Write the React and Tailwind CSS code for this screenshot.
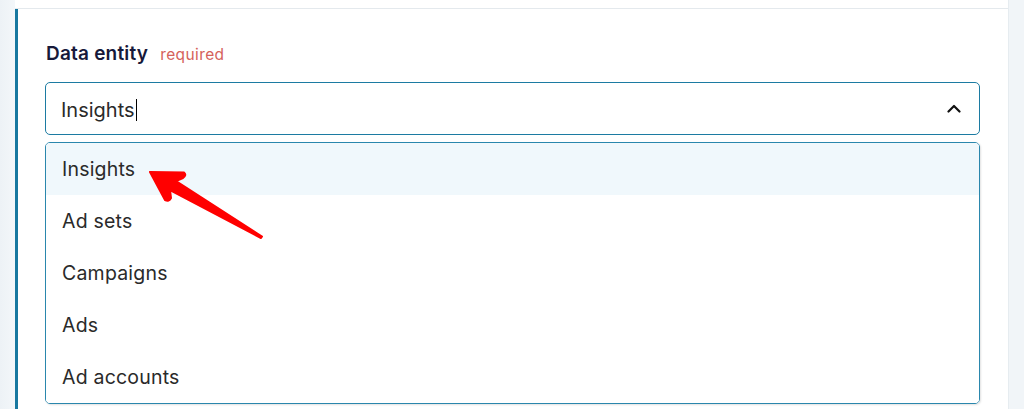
import React from 'react'

const options = ['Insights', 'Ad sets', 'Campaigns', 'Ads', 'Ad accounts']

function ChevronUp() {
    return (
        <svg width="14" height="9" viewBox="0 0 14 9" fill="none">
            <path d="M1.5 7.5L7 2L12.5 7.5" stroke="#111" strokeWidth="2.2" strokeLinecap="round" strokeLinejoin="round" />
        </svg>
    )
}

function RedArrow() {
    return (
        <svg className="absolute left-[144px] top-[166px] pointer-events-none" width="124" height="76" viewBox="144 166 124 76">
            <path
                d="M150 172 L184 172.5 Q187 175 183 178 L176 181 L262 236.5 L261 238 L170 190 L171 198 Q169 202 165 200 Z"
                fill="#ff0000"
                stroke="#ff0000"
                strokeWidth="2"
                strokeLinejoin="round"
            />
        </svg>
    )
}

export default function App() {
    return (
        <div className="relative flex w-[1024px] h-[409px] overflow-hidden bg-white" style={{ fontFamily: 'Inter, "Noto Sans", sans-serif' }}>
            {/* left gutter */}
            <div className="w-[15px] shrink-0 bg-gradient-to-r from-[#edf2f6] to-[#f3f7fa]" />

            <div className="flex-1 flex flex-col bg-white">
                <div className="h-[8px] shrink-0 bg-white" />
                <div className="h-[1px] shrink-0 bg-[#e4e9ed]" />

                {/* card */}
                <div className="flex-1 border-l-[3px] border-[#1878a0] pl-[27px] pr-[28px] pt-[31px]">
                    <div className="flex items-baseline gap-[12px] h-[28px] pl-[1px]">
                        <span className="text-[19px] font-semibold text-[#17193a] tracking-[0.2px]">Data entity</span>
                        <span className="text-[15.5px] text-[#d5625a] tracking-[0.4px]">required</span>
                    </div>

                    <div className="mt-[14px] h-[53px] flex items-center justify-between border-[1.5px] border-[#1c7ba2] rounded-[5px] pl-[15px] pr-[18px]">
                        <div className="flex items-center text-[20px] text-[#2a2a2a] pt-[2px]">
                            <span>Insights</span>
                            <span className="inline-block w-[1.5px] h-[22px] bg-black ml-[1px]" />
                        </div>
                        <ChevronUp />
                    </div>

                    <div className="mt-[7px] border-[1.5px] border-[#2a87ad] rounded-[5px] overflow-hidden shadow-[1px_1px_2px_rgba(0,0,0,0.12)]">
                        {options.map((opt, i) => (
                            <div
                                key={opt}
                                className={`h-[52px] flex items-center pl-[16px] pt-[2px] text-[19.5px] tracking-[0.2px] text-[#2a2a2a] ${i === 0 ? 'bg-[#f0f8fc]' : 'bg-white'}`}
                            >
                                {opt}
                            </div>
                        ))}
                    </div>
                </div>
            </div>

            {/* right gutter */}
            <div className="w-[16px] shrink-0 border-l border-[#e6ecf0] bg-[#f1f5f8]" />

            <RedArrow />
        </div>
    )
}
